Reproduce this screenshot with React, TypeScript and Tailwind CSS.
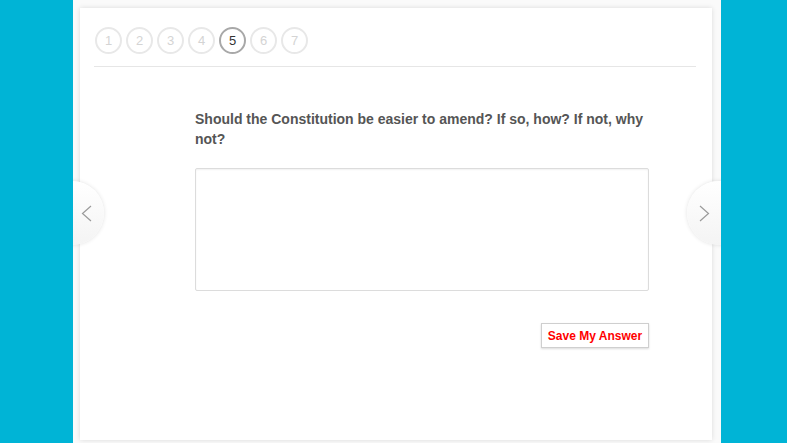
import React from 'react';

const steps = [1, 2, 3, 4, 5, 6, 7];
const current = 5;

const ArrowButton: React.FC<{ side: 'left' | 'right' }> = ({ side }) => (
  <button
    className={
      'absolute top-[181px] w-[64px] h-[64px] rounded-full bg-gradient-to-b from-white to-[#f4f4f4] shadow-[0_0_4px_rgba(0,0,0,0.12)] flex items-center ' +
      (side === 'left' ? 'left-[-33px] justify-end pr-[12px]' : 'left-[614px] justify-start pl-[12px]')
    }
  >
    <svg width="11" height="17" viewBox="0 0 11 17" fill="none">
      {side === 'left' ? (
        <path d="M10 1L1.5 8.5L10 16" stroke="#9a9a9a" strokeWidth="1.2" />
      ) : (
        <path d="M1 1L9.5 8.5L1 16" stroke="#9a9a9a" strokeWidth="1.2" />
      )}
    </svg>
  </button>
);

export default function App() {
  return (
    <div className="w-[787px] h-[443px] bg-[#00b4d6] overflow-hidden" style={{ fontFamily: '"Liberation Sans", Arial, sans-serif' }}>
      <div className="relative ml-[73px] w-[648px] h-[443px] bg-[#fafafa] overflow-hidden">
        <div className="ml-[7px] mt-[8px] w-[632px] h-[432px] bg-white shadow-[0_0_5px_rgba(0,0,0,0.13)]">
          {/* Step indicator */}
          <div className="px-[14px] pt-[19px]">
            <div className="flex gap-[4px] pl-[1px]">
              {steps.map((s) => (
                <div
                  key={s}
                  className={
                    'w-[27px] h-[27px] rounded-full border-2 flex items-center justify-center text-[13px] ' +
                    (s === current ? 'border-[#a8a8a8] text-[#333]' : 'border-[#e8e8e8] text-[#d4d4d4]')
                  }
                >
                  {s}
                </div>
              ))}
            </div>
            <div className="mt-[12px] mr-[2px] h-px bg-[#e6e6e6]" />
          </div>

          {/* Question */}
          <div className="ml-[115px] w-[454px] pt-[42px]">
            <p className="text-[14px] leading-[20px] font-bold text-[#555]">
              Should the Constitution be easier to amend? If so, how? If not, why not?
            </p>
            <textarea className="mt-[19px] block w-[454px] h-[123px] border border-[#dcdcdc] rounded-[2px] shadow-[inset_0_1px_2px_rgba(0,0,0,0.06)] resize-none outline-none" />
            <div className="flex justify-end mt-[32px]">
              <button className="h-[25px] w-[108px] border border-[#cfcfcf] bg-white shadow-[0_1px_2px_rgba(0,0,0,0.15)] text-[12px] font-bold text-[#ff0000]">
                Save My Answer
              </button>
            </div>
          </div>
        </div>

        <ArrowButton side="left" />
        <ArrowButton side="right" />
      </div>
    </div>
  );
}
